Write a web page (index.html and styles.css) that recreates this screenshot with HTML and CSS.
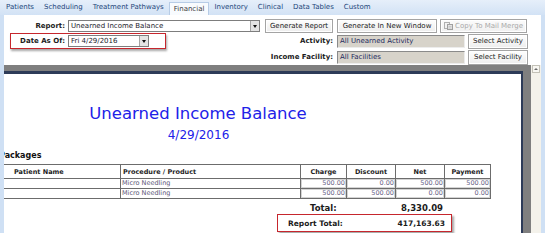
FILE: index.html
```html
<!DOCTYPE html>
<html>
<head>
<meta charset="utf-8">
<link rel="stylesheet" href="styles.css">
</head>
<body>
<div class="app">
  <nav class="tabs">
    <span class="tab">Patients</span>
    <span class="tab">Scheduling</span>
    <span class="tab">Treatment Pathways</span>
    <span class="tab active">Financial</span>
    <span class="tab">Inventory</span>
    <span class="tab">Clinical</span>
    <span class="tab">Data Tables</span>
    <span class="tab">Custom</span>
  </nav>
  <div class="main">
    <div class="form">
      <div class="row1">
        <span class="lbl lbl-report">Report:</span>
        <div class="select sel-report"><span class="sel-text">Unearned Income Balance</span><span class="arrow"><i></i></span></div>
        <button class="btn b-gen">Generate Report</button>
        <button class="btn b-new">Generate In New Window</button>
        <button class="btn b-copy" disabled><svg width="9" height="8" viewBox="0 0 9 8"><rect x="0.5" y="0.5" width="5" height="6" fill="#f2f2f2" stroke="#b0b0b0"/><rect x="3.5" y="2.5" width="5" height="5" fill="#e4e4e4" stroke="#a0a0a0"/><path d="M4.5 4.5h3M4.5 6h3" stroke="#b8b8b8" stroke-width="0.6"/></svg><span>Copy To Mail Merge</span></button>
      </div>
      <div class="row23">
        <div class="hl-box">
          <span class="lbl lbl-date">Date As Of:</span>
          <div class="select sel-date"><span class="sel-text">Fri 4/29/2016</span><span class="arrow"><i></i></span></div>
        </div>
        <div class="filters">
          <span class="lbl">Activity:</span>
          <div class="ro">All Unearned Activity</div>
          <button class="btn btn-sel">Select Activity</button>
          <span class="lbl">Income Facility:</span>
          <div class="ro">All Facilities</div>
          <button class="btn btn-sel">Select Facility</button>
        </div>
      </div>
    </div>
    <div class="viewer">
      <div class="canvas">
        <div class="page">
          <div class="content">
            <div class="title">Unearned Income Balance</div>
            <div class="date">4/29/2016</div>
            <div class="section">Packages</div>
            <table class="grid">
              <colgroup>
                <col style="width:117px"><col style="width:180px"><col style="width:46px"><col style="width:49px"><col style="width:49px"><col style="width:46px">
              </colgroup>
              <thead>
                <tr><th class="th-left th-name">Patient Name</th><th class="th-left">Procedure / Product</th><th>Charge</th><th>Discount</th><th>Net</th><th>Payment</th></tr>
              </thead>
              <tbody>
                <tr><td></td><td>Micro Needling</td><td class="num">500.00</td><td class="num">0.00</td><td class="num">500.00</td><td class="num">500.00</td></tr>
                <tr><td></td><td>Micro Needling</td><td class="num">500.00</td><td class="num">500.00</td><td class="num">0.00</td><td class="num">0.00</td></tr>
              </tbody>
            </table>
            <div class="total-row"><span>Total:</span><span>8,330.09</span></div>
            <div class="report-total"><span>Report Total:</span><span>417,163.63</span></div>
          </div>
        </div>
      </div>
      <div class="vscroll"><div class="sb-up"><i></i></div></div>
    </div>
  </div>
</div>
</body>
</html>
```
FILE: styles.css
```css
html, body {
  margin: 0;
  padding: 0;
}
body {
  width: 545px;
  height: 233px;
  overflow: hidden;
  background: #cfe0f4;
  font-family: "DejaVu Sans", sans-serif;
  font-size: 7px;
  color: #1b1b1b;
}
.app {
  display: flex;
  flex-direction: column;
  height: 233px;
}
.tabs {
  display: flex;
  height: 15px;
  flex: none;
  padding-left: 1px;
  background: linear-gradient(#e6effa, #d2e2f5);
  box-sizing: border-box;
}
.tab {
  padding: 0 5px;
  line-height: 15px;
  color: #23467a;
  white-space: nowrap;
}
.tab.active {
  background: #f8fbfe;
  border: 1px solid #b7cce6;
  border-bottom: none;
  margin-top: 2px;
  padding: 0 4px;
  line-height: 12px;
  color: #3a3a3a;
}
.main {
  flex: 1;
  margin: 0 4px;
  background: #ffffff;
  display: flex;
  flex-direction: column;
  min-height: 0;
}
.form {
  height: 50px;
  flex: none;
}
.row1 {
  display: flex;
  align-items: center;
  height: 14px;
  margin-top: 4px;
}
.lbl {
  font-weight: bold;
  text-align: right;
  white-space: nowrap;
  color: #1b1b1b;
}
.lbl-report {
  width: 61px;
  margin-right: 3px;
}
.select {
  box-sizing: border-box;
  height: 12px;
  border: 1px solid #7d7d7d;
  background: #fff;
  display: flex;
  align-items: stretch;
}
.sel-text {
  flex: 1;
  padding-left: 2px;
  line-height: 10px;
  white-space: nowrap;
  overflow: hidden;
  color: #1b1b2b;
}
.arrow {
  width: 8px;
  background: #e4e4e4;
  border-left: 1px solid #a5a5a5;
  display: flex;
  align-items: center;
  justify-content: center;
}
.arrow i {
  width: 0;
  height: 0;
  border-left: 2.5px solid transparent;
  border-right: 2.5px solid transparent;
  border-top: 3px solid #111;
}
.sel-report {
  width: 192px;
}
.btn {
  box-sizing: border-box;
  height: 14px;
  border: 1px solid #a4a4a4;
  background: linear-gradient(#fefefe, #ededed);
  box-shadow: inset 0 0 0 1px #ffffff;
  font-family: "DejaVu Sans", sans-serif;
  font-size: 7px;
  color: #1b1b1b;
  padding: 0;
  display: flex;
  align-items: center;
  justify-content: center;
  white-space: nowrap;
}
.b-gen {
  width: 68px;
  margin-left: 5px;
}
.b-new {
  width: 100px;
  margin-left: 4px;
}
.b-copy {
  width: 87px;
  margin-left: 3px;
  color: #a9a9a9;
  gap: 2px;
  background: linear-gradient(#fbfbfb, #f0f0f0);
}
.row23 {
  display: flex;
  height: 32px;
}
.hl-box {
  box-sizing: border-box;
  margin-left: 6px;
  width: 156px;
  height: 16px;
  border: 1px solid #c6262d;
  box-shadow: 1px 2px 2px rgba(0, 0, 0, 0.35);
  display: flex;
  align-items: center;
}
.lbl-date {
  width: 54px;
  margin-right: 3px;
}
.sel-date {
  width: 81px;
}
.filters {
  display: grid;
  grid-template-columns: 67px 132px 63px;
  grid-template-rows: 16px 16px;
  align-items: center;
  margin-left: 100px;
}
.ro {
  box-sizing: border-box;
  justify-self: end;
  width: 128px;
  height: 13px;
  background: #d7d3ca;
  border: 1px solid;
  border-color: #8a8a8a #ececec #ececec #8a8a8a;
  padding-left: 2px;
  line-height: 11px;
  color: #1d2a5c;
  white-space: nowrap;
}
.btn-sel {
  justify-self: end;
  width: 60px;
  height: 15px;
}
.viewer {
  flex: 1;
  display: flex;
  min-height: 0;
}
.canvas {
  flex: 1;
  min-width: 0;
  background: #7f7f7f;
  padding: 6px 8px 0 0;
  display: flex;
}
.page {
  flex: 1;
  min-width: 0;
  background: #ffffff;
  border-top: 3px solid #2d3b58;
  border-right: 2px solid #2d3b58;
  overflow: hidden;
}
.content {
  margin-left: -6px;
  width: 500px;
}
.title {
  width: 400px;
  text-align: center;
  color: #2121e8;
  font-size: 16.5px;
  line-height: 20px;
  margin-top: 30px;
}
.date {
  width: 401px;
  text-align: center;
  color: #2121e8;
  font-size: 12px;
  line-height: 14px;
  margin-top: 4px;
}
.section {
  font-weight: bold;
  font-size: 8px;
  line-height: 10px;
  margin-top: 9px;
  margin-left: 1px;
  color: #111;
}
.grid {
  margin-top: 3px;
  margin-left: 5px;
  width: 487px;
  table-layout: fixed;
  border-collapse: collapse;
  font-size: 6.5px;
}
.grid th {
  height: 13px;
  border: 1px solid #6c6c6c;
  font-weight: bold;
  text-align: center;
  padding: 0;
  color: #1d1d1d;
}
.grid th.th-left {
  text-align: left;
  padding-left: 2px;
}
.grid th.th-name {
  padding-left: 10px;
}
.grid td {
  height: 9px;
  border: 1px solid #6c6c6c;
  padding: 0 1px;
  line-height: 9px;
  color: #5b5676;
  white-space: nowrap;
}
.grid td.num {
  text-align: right;
  color: #6a6488;
  box-shadow: inset 0 0 0 1px #d4d4d4;
}
.total-row {
  display: flex;
  justify-content: space-between;
  margin-left: 312px;
  width: 133px;
  margin-top: 4px;
  font-weight: bold;
  font-size: 8.5px;
  line-height: 11px;
  color: #1b1b1b;
}
.report-total {
  box-sizing: border-box;
  margin-left: 279px;
  width: 175px;
  height: 18px;
  border: 1px solid #c6262d;
  box-shadow: 2px 2px 2px rgba(0, 0, 0, 0.35);
  display: flex;
  justify-content: space-between;
  align-items: center;
  padding: 0 6px 0 10px;
  font-weight: bold;
  font-size: 7.5px;
  color: #1b1b1b;
}
.vscroll {
  width: 10px;
  flex: none;
  background: #f4f2eb;
  display: flex;
  flex-direction: column;
}
.sb-up {
  box-sizing: border-box;
  height: 8px;
  margin: 0 1px;
  border: 1px solid #c3c1b7;
  background: #f8f7f2;
  display: flex;
  align-items: center;
  justify-content: center;
}
.sb-up i {
  width: 0;
  height: 0;
  border-left: 2px solid transparent;
  border-right: 2px solid transparent;
  border-bottom: 2px solid #6b6b6b;
}
```
